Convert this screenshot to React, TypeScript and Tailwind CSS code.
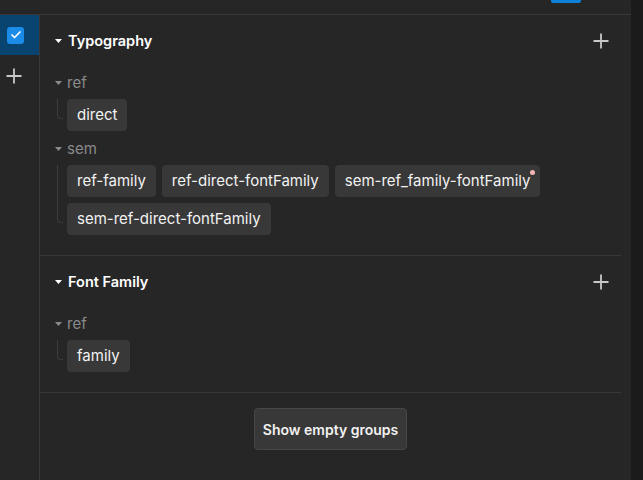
import React from 'react';
import { Check } from 'lucide-react';

interface Group {
  name: string;
  tokens: { label: string; dot?: boolean }[];
}

interface Section {
  title: string;
  groups: Group[];
}

const sections: Section[] = [
  {
    title: 'Typography',
    groups: [
      { name: 'ref', tokens: [{ label: 'direct' }] },
      {
        name: 'sem',
        tokens: [
          { label: 'ref-family' },
          { label: 'ref-direct-fontFamily' },
          { label: 'sem-ref_family-fontFamily', dot: true },
          { label: 'sem-ref-direct-fontFamily' },
        ],
      },
    ],
  },
  {
    title: 'Font Family',
    groups: [{ name: 'ref', tokens: [{ label: 'family' }] }],
  },
];

function Caret({ className }: { className: string }) {
  return (
    <svg width="7" height="4" viewBox="0 0 7 4" className={className}>
      <polygon points="0,0 7,0 3.5,4" fill="currentColor" />
    </svg>
  );
}

function PlusIcon() {
  return (
    <svg width="16" height="16" viewBox="0 0 16 16" className="text-[#c8c8c8]">
      <path d="M8 0.5V15.5M0.5 8H15.5" stroke="currentColor" strokeWidth="1.8" />
    </svg>
  );
}

function TokenGroup({ group }: { group: Group }) {
  return (
    <div className="flex flex-col">
      <div className="flex h-5 items-center text-[15px] text-[#8a8a8a]">
        <Caret className="mr-[5px] text-[#8a8a8a]" />
        <span>{group.name}</span>
      </div>
      <div className="relative ml-3 mt-[6px] flex flex-wrap gap-[6px] pr-3">
        <div className="absolute left-[-10px] top-0 bottom-[12px] w-[6px] rounded-bl-[4px] border-b border-l border-[#3c3c3c]" />
        {group.tokens.map((t) => (
          <div
            key={t.label}
            className="relative flex h-8 items-center rounded-[4px] bg-[#383838] px-[10px] text-[15px] text-[#f2f2f2]"
          >
            {t.label}
            {t.dot && (
              <span className="absolute right-[5px] top-[5px] h-[5px] w-[5px] rounded-full bg-[#f5b5b5]" />
            )}
          </div>
        ))}
      </div>
    </div>
  );
}

export default function App() {
  return (
    <div
      className="flex h-[480px] w-[643px] overflow-hidden bg-[#262626]"
      style={{ fontFamily: 'Inter, "Noto Sans", sans-serif' }}
    >
      <div className="flex w-[631px] flex-col">
        <div className="flex h-[15px] shrink-0 justify-end border-b border-[#383838] pr-[50px]">
          <div className="h-[3px] w-[30px] rounded-b-[2px] bg-[#0d80da]" />
        </div>
        <div className="flex flex-1">
          <div className="flex w-10 shrink-0 flex-col border-r border-[#383838]">
            <div className="flex h-10 items-center bg-[#08446f] pl-[7px]">
              <div className="flex h-[17px] w-[17px] items-center justify-center rounded-[3px] bg-[#1a8be6]">
                <Check size={12} strokeWidth={3.5} className="text-white" />
              </div>
            </div>
            <div className="flex h-[42px] items-center pl-[6px]">
              <PlusIcon />
            </div>
          </div>
          <div className="flex flex-1 flex-col pr-[10px]">
            {sections.map((s) => (
              <div key={s.title} className="flex flex-col border-b border-[#383838] pb-5 pl-[15px] pt-[14px]">
                <div className="flex h-6 items-center justify-between pr-3">
                  <div className="flex items-center text-[14.5px] font-semibold text-white">
                    <Caret className="mr-[6px] text-white" />
                    <span>{s.title}</span>
                  </div>
                  <PlusIcon />
                </div>
                <div className="mt-[20px] flex flex-col gap-[8px]">
                  {s.groups.map((g) => (
                    <TokenGroup key={g.name} group={g} />
                  ))}
                </div>
              </div>
            ))}
            <div className="flex justify-center pt-[15px]">
              <button className="h-[42px] rounded-[4px] border border-[#474747] bg-[#383838] px-[8px] text-[14px] font-semibold text-[#f2f2f2]">
                Show empty groups
              </button>
            </div>
          </div>
        </div>
      </div>
      <div className="flex-1 bg-[#1b1b1b]" />
    </div>
  );
}
